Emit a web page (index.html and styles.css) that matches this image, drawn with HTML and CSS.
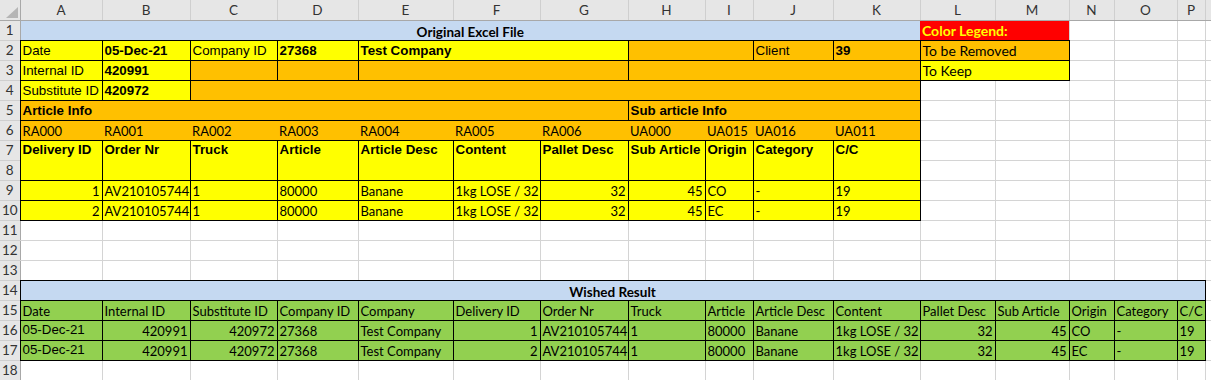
FILE: index.html
```html
<!DOCTYPE html>
<html lang="en">
<head>
    <meta charset="UTF-8">
    <meta name="viewport" content="width=device-width, initial-scale=1.0">
    <title>Original Excel File / Wished Result</title>
    <link rel="stylesheet" href="styles.css">
</head>
<body>

    <table class="sheet">
        <colgroup>
            <col class="c-rh">
            <col class="c-a"><col class="c-b"><col class="c-c"><col class="c-d">
            <col class="c-e"><col class="c-f"><col class="c-g"><col class="c-h">
            <col class="c-i"><col class="c-j"><col class="c-k"><col class="c-l">
            <col class="c-m"><col class="c-n"><col class="c-o"><col class="c-p">
            <col class="c-q">
        </colgroup>

        <!-- column letters -->
        <tr>
            <th class="corner"><svg width="12" height="11" viewBox="0 0 12 11"><polygon points="12,0 12,11 0,11" fill="#b5b5b5"/></svg></th>
            <th class="ch">A</th><th class="ch">B</th><th class="ch">C</th><th class="ch">D</th>
            <th class="ch">E</th><th class="ch">F</th><th class="ch">G</th><th class="ch">H</th>
            <th class="ch">I</th><th class="ch">J</th><th class="ch">K</th><th class="ch">L</th>
            <th class="ch">M</th><th class="ch">N</th><th class="ch">O</th><th class="ch">P</th>
            <th class="ch"></th>
        </tr>

        <!-- Original Excel File -->
        <tr>
            <th class="rn">1</th>
            <td colspan="11" class="blue title open">Original Excel File</td>
            <td colspan="2" class="red legend-head open">Color Legend:</td>
            <td></td><td></td><td></td><td></td>
        </tr>
        <tr>
            <th class="rn">2</th>
            <td class="yellow box ar">Date</td>
            <td class="yellow box ar bold">05-Dec-21</td>
            <td class="yellow box ar">Company ID</td>
            <td class="yellow box ar bold">27368</td>
            <td colspan="3" class="yellow box ar bold">Test Company</td>
            <td colspan="2" class="orange box"></td>
            <td class="orange box ar">Client</td>
            <td class="orange box ar bold">39</td>
            <td colspan="2" class="orange box legend">To be Removed</td>
            <td></td><td></td><td></td><td></td>
        </tr>
        <tr>
            <th class="rn">3</th>
            <td class="yellow box ar">Internal ID</td>
            <td class="yellow box ar bold">420991</td>
            <td class="orange box"></td>
            <td class="orange box"></td>
            <td colspan="3" class="orange box"></td>
            <td colspan="4" class="orange box"></td>
            <td colspan="2" class="yellow box legend">To Keep</td>
            <td></td><td></td><td></td><td></td>
        </tr>
        <tr>
            <th class="rn">4</th>
            <td class="yellow box ar">Substitute ID</td>
            <td class="yellow box ar bold">420972</td>
            <td colspan="9" class="orange box"></td>
            <td></td><td></td><td></td><td></td><td></td><td></td>
        </tr>
        <tr>
            <th class="rn">5</th>
            <td colspan="7" class="orange box ar bold">Article Info</td>
            <td colspan="4" class="orange box ar bold">Sub article Info</td>
            <td></td><td></td><td></td><td></td><td></td><td></td>
        </tr>
        <tr>
            <th class="rn">6</th>
            <td class="orange code first">RA000</td>
            <td class="orange code">RA001</td>
            <td class="orange code">RA002</td>
            <td class="orange code">RA003</td>
            <td class="orange code">RA004</td>
            <td class="orange code">RA005</td>
            <td class="orange code">RA006</td>
            <td class="orange code">UA000</td>
            <td class="orange code">UA015</td>
            <td class="orange code">UA016</td>
            <td class="orange code last">UA011</td>
            <td></td><td></td><td></td><td></td><td></td><td></td>
        </tr>
        <tr>
            <th class="rn">7</th>
            <td rowspan="2" class="yellow box ar bold top">Delivery ID</td>
            <td rowspan="2" class="yellow box ar bold top">Order Nr</td>
            <td rowspan="2" class="yellow box ar bold top">Truck</td>
            <td rowspan="2" class="yellow box ar bold top">Article</td>
            <td rowspan="2" class="yellow box ar bold top">Article Desc</td>
            <td rowspan="2" class="yellow box ar bold top">Content</td>
            <td rowspan="2" class="yellow box ar bold top">Pallet Desc</td>
            <td rowspan="2" class="yellow box ar bold top">Sub Article</td>
            <td rowspan="2" class="yellow box ar bold top">Origin</td>
            <td rowspan="2" class="yellow box ar bold top">Category</td>
            <td rowspan="2" class="yellow box ar bold top">C/C</td>
            <td></td><td></td><td></td><td></td><td></td><td></td>
        </tr>
        <tr>
            <th class="rn">8</th>
            <td></td><td></td><td></td><td></td><td></td><td></td>
        </tr>
        <tr>
            <th class="rn">9</th>
            <td class="yellow box num">1</td>
            <td class="yellow box">AV210105744</td>
            <td class="yellow box">1</td>
            <td class="yellow box">80000</td>
            <td class="yellow box">Banane</td>
            <td class="yellow box">1kg LOSE / 32</td>
            <td class="yellow box num">32</td>
            <td class="yellow box num">45</td>
            <td class="yellow box">CO</td>
            <td class="yellow box">-</td>
            <td class="yellow box">19</td>
            <td></td><td></td><td></td><td></td><td></td><td></td>
        </tr>
        <tr>
            <th class="rn">10</th>
            <td class="yellow box num">2</td>
            <td class="yellow box">AV210105744</td>
            <td class="yellow box">1</td>
            <td class="yellow box">80000</td>
            <td class="yellow box">Banane</td>
            <td class="yellow box">1kg LOSE / 32</td>
            <td class="yellow box num">32</td>
            <td class="yellow box num">45</td>
            <td class="yellow box">EC</td>
            <td class="yellow box">-</td>
            <td class="yellow box">19</td>
            <td></td><td></td><td></td><td></td><td></td><td></td>
        </tr>

        <tr>
            <th class="rn">11</th>
            <td></td><td></td><td></td><td></td><td></td><td></td><td></td><td></td><td></td>
            <td></td><td></td><td></td><td></td><td></td><td></td><td></td><td></td>
        </tr>
        <tr>
            <th class="rn">12</th>
            <td></td><td></td><td></td><td></td><td></td><td></td><td></td><td></td><td></td>
            <td></td><td></td><td></td><td></td><td></td><td></td><td></td><td></td>
        </tr>
        <tr>
            <th class="rn">13</th>
            <td></td><td></td><td></td><td></td><td></td><td></td><td></td><td></td><td></td>
            <td></td><td></td><td></td><td></td><td></td><td></td><td></td><td></td>
        </tr>

        <!-- Wished Result -->
        <tr>
            <th class="rn">14</th>
            <td colspan="16" class="blue box title">Wished Result</td>
            <td></td>
        </tr>
        <tr>
            <th class="rn">15</th>
            <td class="green box">Date</td>
            <td class="green box">Internal ID</td>
            <td class="green box">Substitute ID</td>
            <td class="green box">Company ID</td>
            <td class="green box">Company</td>
            <td class="green box">Delivery ID</td>
            <td class="green box">Order Nr</td>
            <td class="green box">Truck</td>
            <td class="green box">Article</td>
            <td class="green box">Article Desc</td>
            <td class="green box">Content</td>
            <td class="green box">Pallet Desc</td>
            <td class="green box">Sub Article</td>
            <td class="green box">Origin</td>
            <td class="green box">Category</td>
            <td class="green box">C/C</td>
            <td></td>
        </tr>
        <tr>
            <th class="rn">16</th>
            <td class="green box ar top">05-Dec-21</td>
            <td class="green box num">420991</td>
            <td class="green box num">420972</td>
            <td class="green box">27368</td>
            <td class="green box">Test Company</td>
            <td class="green box num">1</td>
            <td class="green box">AV210105744</td>
            <td class="green box">1</td>
            <td class="green box">80000</td>
            <td class="green box">Banane</td>
            <td class="green box">1kg LOSE / 32</td>
            <td class="green box num">32</td>
            <td class="green box num">45</td>
            <td class="green box">CO</td>
            <td class="green box">-</td>
            <td class="green box">19</td>
            <td></td>
        </tr>
        <tr>
            <th class="rn">17</th>
            <td class="green box ar top">05-Dec-21</td>
            <td class="green box num">420991</td>
            <td class="green box num">420972</td>
            <td class="green box">27368</td>
            <td class="green box">Test Company</td>
            <td class="green box num">2</td>
            <td class="green box">AV210105744</td>
            <td class="green box">1</td>
            <td class="green box">80000</td>
            <td class="green box">Banane</td>
            <td class="green box">1kg LOSE / 32</td>
            <td class="green box num">32</td>
            <td class="green box num">45</td>
            <td class="green box">EC</td>
            <td class="green box">-</td>
            <td class="green box">19</td>
            <td></td>
        </tr>
        <tr>
            <th class="rn">18</th>
            <td></td><td></td><td></td><td></td><td></td><td></td><td></td><td></td><td></td>
            <td></td><td></td><td></td><td></td><td></td><td></td><td></td><td></td>
        </tr>
    </table>

</body>
</html>
```

FILE: styles.css
```css
body {
    margin: 0;
    background-color: white;
    overflow: hidden;
}

.sheet {
    border-collapse: collapse;
    table-layout: fixed;
    width: 1225px;
    font-family: Lato, "Liberation Sans", sans-serif;
    font-size: 13px;
    color: black;
}

/* column widths */
.c-rh { width: 20px; }
.c-a { width: 82px; }
.c-b { width: 88px; }
.c-c { width: 87px; }
.c-d { width: 81px; }
.c-e { width: 95px; }
.c-f { width: 87px; }
.c-g { width: 88px; }
.c-h { width: 77px; }
.c-i { width: 48px; }
.c-j { width: 80px; }
.c-k { width: 87px; }
.c-l { width: 75px; }
.c-m { width: 74px; }
.c-n { width: 45px; }
.c-o { width: 63px; }
.c-p { width: 28px; }
.c-q { width: 20px; }

.sheet tr {
    height: 20px;
}

.sheet td {
    border: 1px solid #d4d4d4;
    padding: 1px 2px 0;
    line-height: 16px;
    white-space: nowrap;
    overflow: hidden;
    vertical-align: middle;
}

/* headers */
.sheet th {
    background-color: #e6e6e6;
    color: #333;
    font-size: 13.5px;
    font-weight: normal;
    padding: 0;
    line-height: 16px;
    text-align: center;
}

.ch {
    border-right: 1px solid #cfcfcf;
    border-bottom: 1px solid #a8a8a8;
}

.rn {
    border-right: 1px solid #a8a8a8;
    border-bottom: 1px solid #cfcfcf;
}

.corner {
    border-right: 1px solid #a8a8a8;
    border-bottom: 1px solid #a8a8a8;
    text-align: right !important;
    vertical-align: bottom;
}

.corner svg {
    display: block;
    margin: 6px 2px 2px auto;
}

/* fills */
.yellow { background-color: #ffff00; }
.orange { background-color: #ffc000; }
.blue { background-color: #c5d9f1; }
.green { background-color: #92d050; }
.red { background-color: #ff0000; }

/* black cell borders; double at 1px draws solid and wins over gridlines */
.sheet td.box {
    border: 1px double #000;
}

.sheet td.open {
    border-top: none;
    border-left: none;
    border-right: none;
}

.sheet td.code {
    border-top: 1px double #000;
    border-bottom: 1px double #000;
    border-left: none;
    border-right: none;
}

.sheet td.code.first { border-left: 1px double #000; }
.sheet td.code.last { border-right: 1px double #000; }

/* text */
.ar {
    font-family: "Liberation Sans", Arial, sans-serif;
    font-size: 13.33px;
}

.bold { font-weight: bold; }

.num { text-align: right; }

.sheet td.top {
    vertical-align: top;
    padding-top: 1px;
}

.title {
    font-size: 13.5px;
    font-weight: bold;
    text-align: center;
    vertical-align: bottom !important;
}

.legend-head,
.legend {
    font-size: 14px;
}

.legend-head {
    font-weight: bold;
    color: #ffff00;
}
```
